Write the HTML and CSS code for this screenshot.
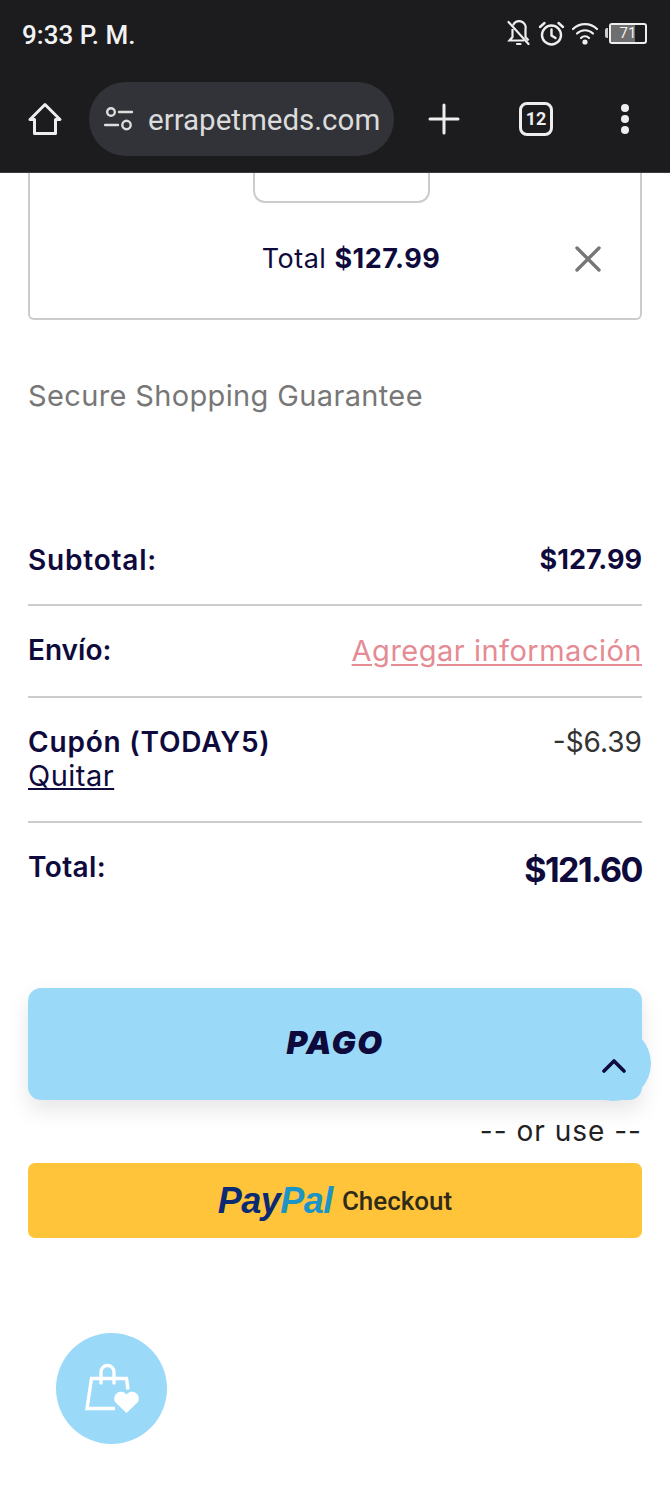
FILE: index.html
```html
<!DOCTYPE html>
<html lang="es">
<head>
  <meta charset="UTF-8" />
  <title>Carrito</title>
  <link rel="stylesheet" href="styles.css">
</head>
<body>
  <div class="phone">
    <header class="browser">
      <div class="statusbar">
        <span class="clock">9:33 P. M.</span>
        <div class="status-icons">
          <svg width="24" height="26" viewBox="0 0 24 26" fill="none" stroke="#eee" stroke-width="2.200"><path d="M6 5.500A6.500 6.500 0 0 1 18.500 9v8l3 3.500M17 20.500H2.500l3-3.500V9"/><path d="M1.500 2l20 22" stroke-linecap="round"/><path d="M10 24h3.500" stroke-linecap="round"/></svg>
          <svg width="27" height="25" viewBox="0 0 27 25" fill="none" stroke="#eee" stroke-width="2.400"><circle cx="13.500" cy="14" r="9.500"/><path d="M13.500 8.500v6l4 2.500" stroke-linecap="round"/><path d="M2 6l4.500-4M25 6l-4.500-4" stroke-linecap="round"/></svg>
          <svg width="26" height="24" viewBox="0 0 26 24" fill="none" stroke="#eee" stroke-width="2.200" stroke-linecap="round"><path d="M1 8a17 17 0 0 1 24 0"/><path d="M5 12.500a11.500 11.500 0 0 1 16 0"/><path d="M9 17a5.500 5.500 0 0 1 8 0"/><circle cx="13" cy="21" r="1.500" fill="#eee"/></svg>
          <div class="battery">
            <span class="battery-cap"></span>
            <div class="battery-body"><span class="battery-level"></span><span class="battery-num">71</span></div>
          </div>
        </div>
      </div>
      <div class="toolbar">
        <svg class="tool-home" width="36" height="36" viewBox="0 0 36 36" fill="none" stroke="#eee" stroke-width="3" stroke-linejoin="round"><path d="M3 18.500L18 3.500l15 15h-4.500v14h-21v-14z"/></svg>
        <div class="omnibox">
          <svg width="30" height="26" viewBox="0 0 30 26" fill="none" stroke="#ddd" stroke-width="2.400"><circle cx="7" cy="6" r="3.800"/><path d="M15 6h13M1 19h13" stroke-linecap="round"/><circle cx="22.500" cy="19" r="4.200"/></svg>
          <span class="url">errapetmeds.com</span>
        </div>
        <svg class="tool-plus" width="32" height="32" viewBox="0 0 32 32" stroke="#eee" stroke-width="3" stroke-linecap="round"><path d="M16 2v28M2 16h28"/></svg>
        <div class="tabs-count">12</div>
        <div class="tool-menu"><span></span><span></span><span></span></div>
      </div>
    </header>

    <main class="cart">
      <section class="product-card">
        <div class="qty-box"></div>
        <div class="product-total">
          <span>Total <strong>$127.99</strong></span>
          <svg class="remove" width="28" height="28" viewBox="0 0 28 28" stroke="#777" stroke-width="3.400" stroke-linecap="round"><path d="M3 3l22 22M25 3L3 25"/></svg>
        </div>
      </section>

      <p class="guarantee">Secure Shopping Guarantee</p>

      <section class="summary">
        <div class="row row-subtotal">
          <span class="label">Subtotal:</span>
          <span class="price">$127.99</span>
        </div>
        <div class="row row-shipping">
          <span class="label">Envío:</span>
          <a href="#" class="add-info">Agregar información</a>
        </div>
        <div class="row row-coupon">
          <div>
            <div class="label coupon-name">Cupón (TODAY5)</div>
            <a href="#" class="remove-coupon">Quitar</a>
          </div>
          <span class="discount">-$6.39</span>
        </div>
        <div class="row row-total">
          <span class="label">Total:</span>
          <span class="grand-total">$121.60</span>
        </div>
      </section>

      <button class="btn-pay">PAGO</button>
      <p class="or-use">-- or use --</p>
      <button class="btn-paypal">
        <span class="pp-word"><span class="pp-dark">Pay</span><span class="pp-light">Pal</span></span>
        <span class="pp-checkout">Checkout</span>
      </button>
    </main>

    <button class="scroll-top">
      <svg width="26" height="16" viewBox="0 0 26 16" fill="none" stroke="#0f0a3c" stroke-width="3.600" stroke-linecap="round" stroke-linejoin="round"><path d="M3 14L13 4l10 10"/></svg>
    </button>
    <button class="wishlist">
      <svg width="56" height="54" viewBox="0 0 56 54" fill="none" stroke="#fff" stroke-width="3.400"><path d="M31 46.500H3L7.500 16.500h35l1.500 11"/><path d="M17 21V10a6.500 6.500 0 0 1 13 0v11" stroke-linecap="round"/><path fill="#fff" stroke="none" d="M42.500 51L31.500 40.500a6.800 6.800 0 0 1 11-8a6.800 6.800 0 0 1 11 8z"/></svg>
    </button>
  </div>
</body>
</html>
```
FILE: styles.css
```css
* { box-sizing: border-box; }
html, body { margin: 0; padding: 0; background: #fff; }
body { font-family: "Inter", "Open Sans", sans-serif; color: #0f0a3c; }
.phone { position: relative; width: 670px; height: 1500px; overflow: hidden; }
button { font-family: inherit; border: none; padding: 0; }

/* browser chrome */
.browser { height: 173px; background: #1c1c1e; border-bottom: 1px solid #3a3a3c; padding: 0 22px; }
.statusbar {
  height: 70px; display: flex; justify-content: space-between; align-items: center;
}
.clock { font-family: "Roboto", sans-serif; font-size: 26px; font-weight: 500; color: #f2f2f2; }
.status-icons { display: flex; align-items: center; gap: 7px; margin-right: 1px; margin-bottom: 4px; }
.battery { display: flex; align-items: center; }
.battery-cap { width: 3px; height: 10px; background: #ccc; border-radius: 2px 0 0 2px; margin-right: 1px; }
.battery-body {
  position: relative; width: 38px; height: 21px; border: 2px solid #eee; border-radius: 3px;
  font-family: "Roboto", sans-serif; font-size: 15px; line-height: 17px; text-align: center; color: #eee;
}
.battery-level { position: absolute; left: 0; top: 0; bottom: 0; width: 71%; background: #6e6e6e; }
.battery-num { position: relative; }
.toolbar { display: flex; align-items: center; height: 74px; margin-top: 12px; }
.tool-home { margin-left: 5px; flex: none; }
.omnibox {
  width: 305px; height: 74px; margin-left: 26px; background: #323338; border-radius: 37px;
  display: flex; align-items: center; padding-left: 15px; gap: 14px; overflow: hidden; flex: none;
}
.omnibox svg { flex: none; }
.url { font-family: "Roboto", sans-serif; font-size: 29.500px; line-height: 36px; padding-top: 2px; color: #dcdcdc; white-space: nowrap; }
.tool-plus { margin-left: 34px; flex: none; }
.tabs-count {
  width: 34px; height: 34px; margin-left: 59px; border: 3px solid #eee; border-radius: 8px;
  font-family: "Roboto", sans-serif; font-weight: 700; font-size: 18px; line-height: 28px;
  text-align: center; color: #eee; flex: none;
}
.tool-menu { margin-left: 68px; display: flex; flex-direction: column; gap: 3px; }
.tool-menu span { width: 8px; height: 8px; border-radius: 50%; background: #eee; }

/* cart */
.cart { padding: 0 28px; }
.product-card {
  height: 147px; border: 2px solid #ccc; border-top: none; border-radius: 0 0 6px 6px;
  display: flex; flex-direction: column; align-items: center;
}
.qty-box {
  width: 177px; height: 30px; margin-left: 12px;
  border: 2px solid #ccc; border-top: none; border-radius: 0 0 12px 12px;
}
.product-total {
  position: relative; width: 100%; margin-top: 39px; text-align: center;
  font-size: 27px; line-height: 34px; padding-left: 32px; letter-spacing: 0.5px;
}
.remove { position: absolute; right: 38px; top: 3px; }
.guarantee { margin: 58px 0 0; font-size: 29px; line-height: 36px; letter-spacing: 0.36px; color: #777; }

.summary { margin-top: 129px; }
.row { display: flex; justify-content: space-between; border-bottom: 2px solid #ccc; }
.label { font-size: 28px; font-weight: 600; }
.row-subtotal { height: 63px; }
.row-subtotal .label { letter-spacing: 0.8px; }
.price { font-size: 27px; font-weight: 700; }
.row-shipping { height: 92px; padding-top: 27px; }
.add-info {
  font-size: 29px; letter-spacing: 0.5px; color: #e58b94;
  text-decoration: underline; text-underline-offset: 3px;
}
.row-coupon { height: 125px; padding-top: 25px; }
.coupon-name { line-height: 38px; letter-spacing: 0.8px; }
.remove-coupon { display: block; font-size: 29px; letter-spacing: 0.5px; line-height: 30px; color: #0f0a3c; }
.discount { font-size: 28px; line-height: 38px; color: #333; }
.row-total { border: none; padding-top: 25px; align-items: flex-start; }
.grand-total { font-size: 34px; font-weight: 700; line-height: 44px; letter-spacing: -1.500px; }
.row-total .label { line-height: 38px; letter-spacing: 0.4px; }

.btn-pay {
  display: block; width: 100%; height: 112px; margin-top: 96px; background: #9bd9f9; border-radius: 13px;
  box-shadow: 0 10px 22px rgba(0, 0, 0, 0.1);
  font-size: 32px; font-weight: 900; font-style: italic; letter-spacing: 1.500px; color: #0f0a3c;
  padding-bottom: 3px;
}
.or-use { margin: 14px 0 15px; text-align: right; font-size: 28px; line-height: 34px; letter-spacing: 1px; color: #222; }
.btn-paypal {
  display: flex; justify-content: center; align-items: center; gap: 9px;
  width: 100%; height: 75px; background: #ffc439; border-radius: 7px;
}
.pp-word { font-family: "Liberation Sans", sans-serif; font-size: 36px; font-weight: 700; font-style: italic; letter-spacing: -0.5px; }
.pp-dark { color: #0a2a73; }
.pp-light { color: #1b94c6; }
.pp-checkout { font-family: "Roboto", sans-serif; font-size: 26px; font-weight: 500; color: #2f2a1a; }

/* floating buttons */
.scroll-top {
  position: absolute; left: 576px; top: 1026px; width: 75px; height: 75px; border-radius: 50%;
  background: #9bd9f9; display: flex; justify-content: center; align-items: center; padding-top: 2px;
}
.wishlist {
  position: absolute; left: 56px; top: 1333px; width: 111px; height: 111px; border-radius: 50%;
  background: #9bd9f9; display: flex; justify-content: center; align-items: center;
}
```
